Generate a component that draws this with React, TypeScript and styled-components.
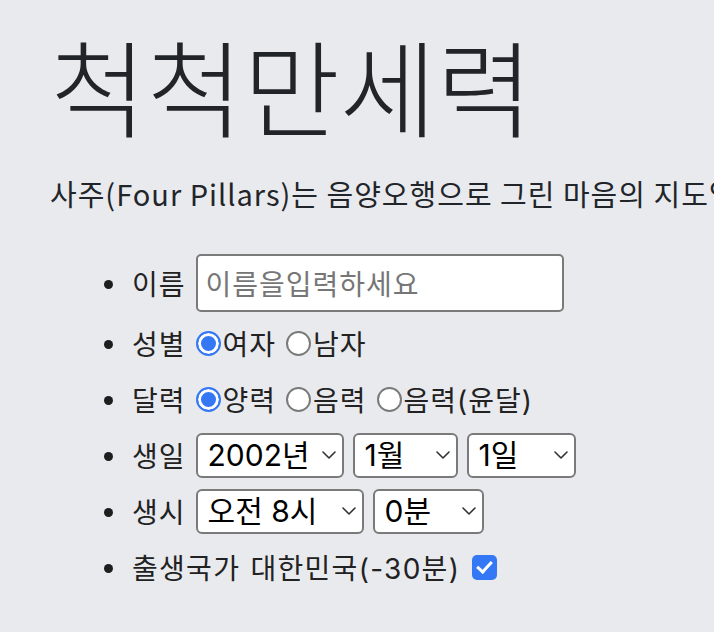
import React from "react";
import styled, { createGlobalStyle } from "styled-components";

const Global = createGlobalStyle`
  html, body {
    margin: 0;
    padding: 0;
    background: #e9eaee;
    overflow: hidden;
  }
  body {
    font-family: "Noto Sans CJK KR", "Noto Sans", sans-serif;
    color: #212529;
  }
`;

const Page = styled.main`
  width: 714px;
  height: 632px;
  overflow: hidden;
  padding: 0 0 0 50px;
  box-sizing: border-box;
  background: #e9eaee;
`;

const Title = styled.h1`
  margin: 0;
  padding-top: 13px;
  font-family: "Noto Sans CJK KR", sans-serif;
  font-weight: 300;
  font-size: 105px;
  line-height: 140px;
  color: #212529;
  white-space: nowrap;
`;

const Lead = styled.p`
  margin: 20px 0 0;
  font-family: "Noto Sans CJK KR", sans-serif;
  font-weight: 400;
  font-size: 29px;
  letter-spacing: 1px;
  line-height: 40px;
  color: #212529;
  white-space: nowrap;
  overflow: hidden;
`;

const List = styled.ul`
  list-style: none;
  margin: 38px 0 0;
  padding: 0 0 0 82px;
  display: flex;
  flex-direction: column;
`;

const Item = styled.li`
  position: relative;
  display: flex;
  align-items: center;
  gap: 10px;
  min-height: 56px;
  font-family: "Inter", "Noto Sans CJK KR", sans-serif;
  font-size: 28px;
  letter-spacing: 1px;
  color: #222;
  white-space: nowrap;

  &::before {
    content: "";
    position: absolute;
    left: -28px;
    top: 50%;
    margin-top: -3px;
    width: 9px;
    height: 9px;
    border-radius: 50%;
    background: #1e1e1e;
  }
`;

const Label = styled.span`
  font-family: "Noto Sans CJK KR", sans-serif;
`;

const LongLabel = styled.span`
  font-family: "Inter", "Noto Sans CJK KR", sans-serif;
  letter-spacing: 1.3px;
  word-spacing: 1px;
  margin-right: 2px;
`;

const TextInput = styled.input`
  box-sizing: border-box;
  width: 368px;
  height: 58px;
  margin: 3px 0;
  padding: 0 8px;
  border: 2px solid #7a7a7a;
  border-radius: 5px;
  background: #fff;
  font-family: "Noto Sans CJK KR", sans-serif;
  font-size: 28px;
  letter-spacing: 1px;
  color: #000;
  outline: none;

  &::placeholder {
    color: #767676;
  }
`;

const Options = styled.div`
  display: flex;
  align-items: center;
  gap: 10px;
`;

const Option = styled.label`
  display: flex;
  align-items: center;
  gap: 2px;
`;

const Radio = styled.input.attrs({ type: "radio" })`
  appearance: none;
  -webkit-appearance: none;
  margin: 0;
  width: 25px;
  height: 25px;
  box-sizing: border-box;
  border-radius: 50%;
  border: 2px solid #7a7a7a;
  background: #fff;

  &:checked {
    border: 2.5px solid #3478f6;
    background: #3478f6;
    box-shadow: inset 0 0 0 3px #fff;
  }
`;

const Selects = styled.div`
  display: flex;
  align-items: center;
  gap: 9px;
`;

const SelectWrap = styled.div<{ $w: number }>`
  position: relative;
  width: ${(p) => p.$w}px;
  height: 45px;
`;

const Select = styled.select`
  appearance: none;
  -webkit-appearance: none;
  width: 100%;
  height: 100%;
  box-sizing: border-box;
  margin: 0;
  padding: 0 0 0 10px;
  border: 2px solid #7a7a7a;
  border-radius: 6px;
  background: #fff;
  font-family: "Inter", "Noto Sans CJK KR", sans-serif;
  font-size: 30px;
  letter-spacing: 0;
  color: #000;
  outline: none;
`;

const Chevron = styled.svg`
  position: absolute;
  right: 8px;
  top: 50%;
  margin-top: -4px;
  width: 14px;
  height: 8px;
  pointer-events: none;
`;

const CheckBox = styled.input.attrs({ type: "checkbox" })`
  appearance: none;
  -webkit-appearance: none;
  position: relative;
  margin: 0;
  width: 25px;
  height: 25px;
  border-radius: 5px;
  background: #3478f6;

  &::after {
    content: "";
    position: absolute;
    left: 8px;
    top: 3px;
    width: 6px;
    height: 12px;
    border: solid #fff;
    border-width: 0 3.5px 3.5px 0;
    transform: rotate(42deg);
  }
`;

function Dropdown({ w, value, options }: { w: number; value: string; options: string[] }) {
  return (
    <SelectWrap $w={w}>
      <Select defaultValue={value}>
        {options.map((o) => (
          <option key={o} value={o}>
            {o}
          </option>
        ))}
      </Select>
      <Chevron viewBox="0 0 14 8">
        <path d="M1 1 L7 7 L13 1" fill="none" stroke="#333" strokeWidth="1.6" strokeLinecap="round" strokeLinejoin="round" />
      </Chevron>
    </SelectWrap>
  );
}

const years = Array.from({ length: 100 }, (_, i) => `${1950 + i}년`);
const months = Array.from({ length: 12 }, (_, i) => `${i + 1}월`);
const days = Array.from({ length: 31 }, (_, i) => `${i + 1}일`);
const hours = Array.from({ length: 24 }, (_, i) =>
  i < 12 ? `오전 ${i === 0 ? 12 : i}시` : `오후 ${i === 12 ? 12 : i - 12}시`
);
const minutes = Array.from({ length: 60 }, (_, i) => `${i}분`);

export default function App() {
  return (
    <Page>
      <Global />
      <Title>척척만세력</Title>
      <Lead>사주(Four Pillars)는 음양오행으로 그린 마음의 지도입니다.</Lead>
      <List>
        <Item>
          <Label>이름</Label>
          <TextInput placeholder="이름을입력하세요" />
        </Item>
        <Item>
          <Label>성별</Label>
          <Options>
            <Option>
              <Radio name="gender" defaultChecked />
              여자
            </Option>
            <Option>
              <Radio name="gender" />
              남자
            </Option>
          </Options>
        </Item>
        <Item>
          <Label>달력</Label>
          <Options>
            <Option>
              <Radio name="cal" defaultChecked />
              양력
            </Option>
            <Option>
              <Radio name="cal" />
              음력
            </Option>
            <Option>
              <Radio name="cal" />
              음력(윤달)
            </Option>
          </Options>
        </Item>
        <Item>
          <Label>생일</Label>
          <Selects>
            <Dropdown w={148} value="2002년" options={years} />
            <Dropdown w={105} value="1월" options={months} />
            <Dropdown w={109} value="1일" options={days} />
          </Selects>
        </Item>
        <Item>
          <Label>생시</Label>
          <Selects>
            <Dropdown w={168} value="오전 8시" options={hours} />
            <Dropdown w={111} value="0분" options={minutes} />
          </Selects>
        </Item>
        <Item>
          <LongLabel>출생국가 대한민국(-30분)</LongLabel>
          <CheckBox defaultChecked />
        </Item>
      </List>
    </Page>
  );
}
